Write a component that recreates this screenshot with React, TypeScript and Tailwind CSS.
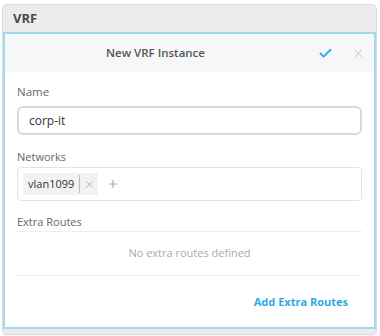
import { Check, X, Plus } from 'lucide-react';

export default function App() {
  return (
    <div
      className="h-[336px] w-[380px] bg-white pl-[2px] pr-[3px] pt-[4px]"
      style={{ fontFamily: '"Open Sans", "Noto Sans", sans-serif' }}
    >
      <div className="rounded-[5px] border border-[#dcdcdc] bg-[#ececec] pb-[5px] shadow-[0_1px_1px_rgba(0,0,0,0.05)]">
        {/* card header */}
        <div className="flex h-[27px] items-center px-[10px] text-[13px] font-bold text-[#4a4a4a]">VRF</div>

        {/* editing panel */}
        <div className="border-2 border-[#a3d8f3] bg-white">
          <div className="flex h-[38px] items-center bg-[#f6f7f8]">
            <div className="flex-1 text-center text-[11.5px] font-semibold text-[#555]">New VRF Instance</div>
            <div className="flex w-[68px] items-center gap-[19px] pl-[12px]">
              <Check size={15} strokeWidth={3} className="text-[#2ea8e6]" />
              <X size={13} strokeWidth={1.5} className="text-[#b5b5b5]" />
            </div>
          </div>

          <div className="px-[12px] pb-[17px] pt-[11px]">
            <div className="text-[11.5px] leading-[18px] text-[#666]">Name</div>
            <div className="mt-[5px] flex h-[29px] items-center rounded-[6px] border-2 border-[#d9d9d9] px-[10px] text-[12px] text-[#333]">
              corp-it
            </div>

            <div className="mt-[13px] text-[11px] leading-[18px] text-[#666]">Networks</div>
            <div className="mt-[1px] flex h-[34px] items-center gap-[9px] rounded-[4px] border border-[#e3e3e3] px-[5px]">
              <div className="flex h-[22px] items-center bg-[#f2f2f2]">
                <span className="px-[5px] text-[11px] text-[#333]">vlan1099</span>
                <span className="h-[18px] w-px bg-[#bbb]" />
                <span className="flex w-[18px] justify-center">
                  <X size={11} strokeWidth={1.6} className="text-[#999]" />
                </span>
              </div>
              <Plus size={12} strokeWidth={2.4} className="text-[#aaa]" />
            </div>

            <div className="mt-[12px] border-b border-[#eeeeee] text-[11px] leading-[18px] text-[#666]">
              Extra Routes
            </div>
            <div className="flex h-[44px] items-center justify-center border-b border-[#eeeeee] text-[11px] text-[#aaa]">
              No extra routes defined
            </div>
            <div className="mt-[18px] flex justify-end pr-[14px]">
              <span className="text-[11px] font-bold leading-[16px] text-[#2ea8e6]">Add Extra Routes</span>
            </div>
          </div>
        </div>
      </div>
    </div>
  );
}
